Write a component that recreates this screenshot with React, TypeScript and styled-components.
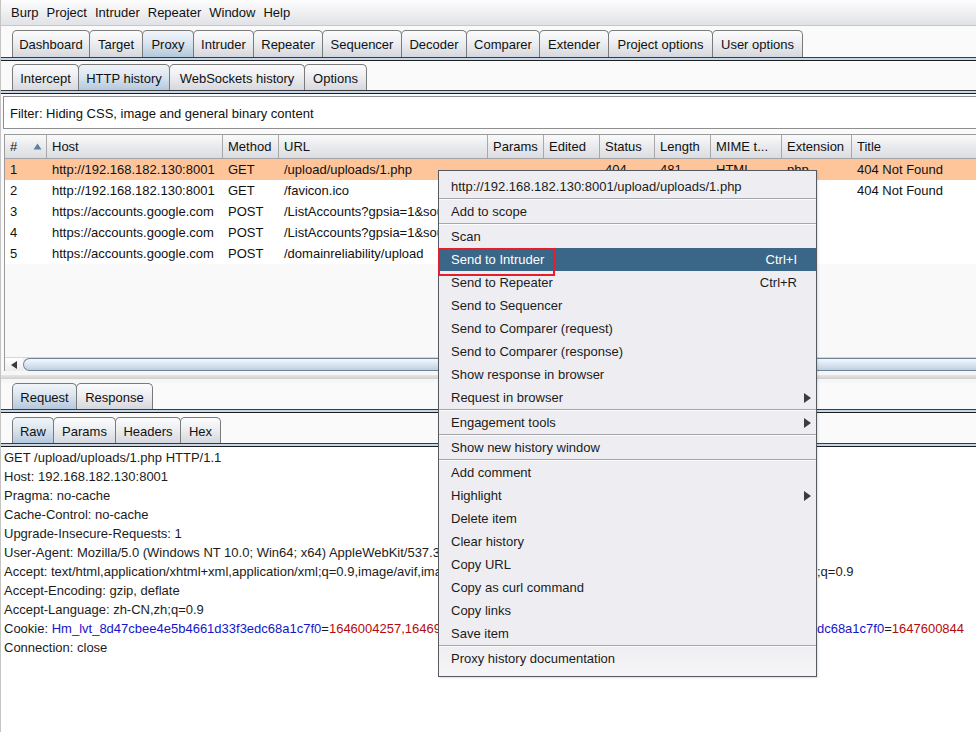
import React from "react";
import styled, { createGlobalStyle } from "styled-components";

const GlobalStyle = createGlobalStyle`
  html, body {
    margin: 0;
    padding: 0;
    background: #fafafa;
  }
  body {
    font-family: "Liberation Sans", Arial, sans-serif;
    font-size: 13px;
    color: #111;
  }
  * {
    box-sizing: border-box;
  }
`;

const Frame = styled.div`
  position: relative;
  width: 976px;
  height: 732px;
  overflow: hidden;
  display: flex;
  flex-direction: column;
  background: #fafafa;
  border-left: 1px solid #c4c4c4;
`;

const MenuBar = styled.div`
  height: 26px;
  flex: none;
  display: flex;
  align-items: center;
  padding-left: 6px;
  background: linear-gradient(#fdfdfd, #e1e2e6);
  border-bottom: 1px solid #c6c7cc;
`;

const MenuEntry = styled.span`
  padding: 0 4px;
  line-height: 25px;
`;

const TabRow = styled.div<{ $top: number; $h?: number }>`
  display: flex;
  flex: none;
  height: ${(p) => p.$h ?? 26}px;
  margin-top: ${(p) => p.$top}px;
  padding-left: 11px;
`;

const Tab = styled.div<{ $active?: boolean; $w: number }>`
  width: ${(p) => p.$w + 1}px;
  height: 100%;
  padding-top: 1px;
  margin-right: -1px;
  display: flex;
  align-items: center;
  justify-content: center;
  white-space: nowrap;
  border: 1px solid #7a7a7a;
  border-bottom: none;
  border-radius: 5px 5px 0 0;
  background: ${(p) =>
    p.$active
      ? "linear-gradient(#f1f5f9, #dbe5ef 45%, #b4c8dc)"
      : "linear-gradient(#fcfcfd, #eceef1 45%, #d6d8de)"};
`;

const Strip = styled.div`
  flex: none;
  height: 4px;
  border-top: 1px solid #3a3a3a;
  border-bottom: 1px solid #1e1e1e;
  background: #c5d7ea;
`;

const FilterBar = styled.div`
  flex: none;
  height: 33px;
  margin: 2px 0 0 2px;
  padding: 1px 0 0 6px;
  display: flex;
  align-items: center;
  background: #fff;
  border: 1px solid #8f8f8f;
  border-right: none;
`;

const Table = styled.div`
  flex: none;
  height: 237px;
  margin: 5px 0 0 3px;
  display: flex;
  flex-direction: column;
  background: #f9f9f9;
  border-left: 1px solid #9a9a9a;
  border-top: 1px solid #9a9a9a;
`;

const HeaderRow = styled.div`
  flex: none;
  height: 24px;
  display: flex;
  background: linear-gradient(#fafafa, #e9eaed 50%, #dcdde2);
  border-bottom: 1px solid #a3a3a3;
`;

const HeadCell = styled.div<{ $w: number }>`
  width: ${(p) => p.$w}px;
  flex: none;
  padding: 0 4px 0 5px;
  display: flex;
  align-items: center;
  justify-content: space-between;
  white-space: nowrap;
  overflow: hidden;
  border-right: 1px solid #a9a9a9;
`;

const Row = styled.div<{ $selected?: boolean }>`
  flex: none;
  height: 21px;
  display: flex;
  align-items: center;
  background: ${(p) => (p.$selected ? "#fec59b" : "#ffffff")};
`;

const Cell = styled.div<{ $w: number }>`
  width: ${(p) => p.$w}px;
  flex: none;
  padding-left: 5px;
  white-space: nowrap;
  overflow: hidden;
`;

const TableFill = styled.div`
  flex: 1;
  background: #f9f9f9;
`;

const HScroll = styled.div`
  flex: none;
  height: 14px;
  display: flex;
  background: #eef0f3;
  border-top: 1px solid #d6d6d6;
`;

const ScrollButton = styled.div`
  width: 18px;
  flex: none;
  display: flex;
  align-items: center;
  justify-content: center;
  background: linear-gradient(#ffffff, #ececec);
`;

const ScrollThumb = styled.div`
  flex: 1;
  border: 1px solid #6f8296;
  border-right: none;
  border-radius: 8px 0 0 8px;
  background: linear-gradient(#f4f7fb, #dce7f2 45%, #bccfe3);
`;

const SplitDivider = styled.div`
  flex: none;
  height: 12px;
  display: flex;
  align-items: center;
  background: #f6f6f6;
  &::before {
    content: "";
    flex: 1;
    height: 4px;
    background: linear-gradient(#e6e6e6, #cfcfcf);
  }
`;

const Editor = styled.div`
  flex: 1;
  background: #fff;
  padding: 1px 0 0 3px;
  font-size: 13px;
  line-height: 19px;
  color: #1c1c1c;
  white-space: pre;
`;

const Key = styled.span`
  color: #1515c8;
`;

const Val = styled.span`
  color: #b30c0c;
`;

const ContextMenu = styled.div`
  position: absolute;
  left: 437px;
  top: 170px;
  width: 379px;
  height: 507px;
  padding: 4px 0 7px;
  background: linear-gradient(#eeeef2 94%, #f6f6f8);
  border: 1px solid #555a60;
  color: #1b1b1b;
  box-shadow: 1px 1px 2px rgba(0, 0, 0, 0.12);
`;

const MenuItem = styled.div<{ $hot?: boolean }>`
  position: relative;
  height: 23px;
  display: flex;
  align-items: center;
  justify-content: space-between;
  padding: 0 19px 0 12px;
  white-space: nowrap;
  background: ${(p) => (p.$hot ? "#3a6688" : "transparent")};
  color: ${(p) => (p.$hot ? "#ffffff" : "inherit")};
  ${(p) =>
    p.$hot &&
    `&::after {
      content: "";
      position: absolute;
      left: -1px;
      top: 0;
      width: 113px;
      height: 24px;
      border: 2px solid #e41f2b;
    }`}
`;

const Shortcut = styled.span`
  margin-right: 0;
`;

const SubArrow = styled.svg`
  margin-right: -14px;
`;

const Separator = styled.div`
  height: 2px;
  border-top: 1px solid #a6a7ad;
  border-bottom: 1px solid #fbfbfc;
`;

const mainTabs: [string, number][] = [
  ["Dashboard", 77],
  ["Target", 53],
  ["Proxy", 51],
  ["Intruder", 60],
  ["Repeater", 69],
  ["Sequencer", 79],
  ["Decoder", 65],
  ["Comparer", 73],
  ["Extender", 69],
  ["Project options", 104],
  ["User options", 90],
];

const proxyTabs: [string, number][] = [
  ["Intercept", 66],
  ["HTTP history", 91],
  ["WebSockets history", 135],
  ["Options", 62],
];

const messageTabs: [string, number][] = [
  ["Request", 64],
  ["Response", 76],
];

const viewTabs: [string, number][] = [
  ["Raw", 41],
  ["Params", 62],
  ["Headers", 65],
  ["Hex", 40],
];

const cols = [
  { name: "#", w: 42 },
  { name: "Host", w: 176 },
  { name: "Method", w: 56 },
  { name: "URL", w: 209 },
  { name: "Params", w: 56 },
  { name: "Edited", w: 56 },
  { name: "Status", w: 55 },
  { name: "Length", w: 56 },
  { name: "MIME t...", w: 71 },
  { name: "Extension", w: 70 },
  { name: "Title", w: 300 },
];

const listUrl = "/ListAccounts?gpsia=1&source=ChromiumBrowser&json=standard";

const rows = [
  ["1", "http://192.168.182.130:8001", "GET", "/upload/uploads/1.php", "", "", "404", "481", "HTML", "php", "404 Not Found"],
  ["2", "http://192.168.182.130:8001", "GET", "/favicon.ico", "", "", "404", "481", "HTML", "ico", "404 Not Found"],
  ["3", "https://accounts.google.com", "POST", listUrl, "", "", "200", "836", "JSON", "", ""],
  ["4", "https://accounts.google.com", "POST", listUrl, "", "", "200", "836", "JSON", "", ""],
  ["5", "https://accounts.google.com", "POST", "/domainreliability/upload", "", "", "200", "311", "", "", ""],
];

type Entry =
  | { sep: true }
  | { label: string; key?: string; sub?: boolean; hot?: boolean };

const menu: Entry[] = [
  { label: "http://192.168.182.130:8001/upload/uploads/1.php" },
  { sep: true },
  { label: "Add to scope" },
  { sep: true },
  { label: "Scan" },
  { label: "Send to Intruder", key: "Ctrl+I", hot: true },
  { label: "Send to Repeater", key: "Ctrl+R" },
  { label: "Send to Sequencer" },
  { label: "Send to Comparer (request)" },
  { label: "Send to Comparer (response)" },
  { label: "Show response in browser" },
  { label: "Request in browser", sub: true },
  { sep: true },
  { label: "Engagement tools", sub: true },
  { sep: true },
  { label: "Show new history window" },
  { sep: true },
  { label: "Add comment" },
  { label: "Highlight", sub: true },
  { label: "Delete item" },
  { label: "Clear history" },
  { label: "Copy URL" },
  { label: "Copy as curl command" },
  { label: "Copy links" },
  { label: "Save item" },
  { sep: true },
  { label: "Proxy history documentation" },
];

const cookieName = "8d47cbee4e5b4661d33f3edc68a1c7f0";

const TabSet = ({ tabs, active }: { tabs: [string, number][]; active: string }) => (
  <>
    {tabs.map(([t, w]) => (
      <Tab key={t} $w={w} $active={t === active}>
        {t}
      </Tab>
    ))}
  </>
);

const App = () => {
  return (
    <>
      <GlobalStyle />
      <Frame>
        <MenuBar>
          {["Burp", "Project", "Intruder", "Repeater", "Window", "Help"].map((m) => (
            <MenuEntry key={m}>{m}</MenuEntry>
          ))}
        </MenuBar>

        <TabRow $top={4} $h={27}>
          <TabSet tabs={mainTabs} active="Proxy" />
        </TabRow>
        <Strip />

        <TabRow $top={3}>
          <TabSet tabs={proxyTabs} active="HTTP history" />
        </TabRow>
        <Strip />

        <FilterBar>Filter: Hiding CSS, image and general binary content</FilterBar>

        <Table>
          <HeaderRow>
            {cols.map((c) => (
              <HeadCell key={c.name} $w={c.w}>
                {c.name}
                {c.name === "#" && (
                  <svg width="9" height="7" viewBox="0 0 9 7">
                    <path d="M4.5 0.5 L8.5 6.5 L0.5 6.5 Z" fill="#5a7ea6" />
                  </svg>
                )}
              </HeadCell>
            ))}
          </HeaderRow>
          {rows.map((r, i) => (
            <Row key={r[0]} $selected={i === 0}>
              {r.map((v, j) => (
                <Cell key={j} $w={cols[j].w}>
                  {v}
                </Cell>
              ))}
            </Row>
          ))}
          <TableFill />
          <HScroll>
            <ScrollButton>
              <svg width="6" height="8" viewBox="0 0 6 8">
                <path d="M0 4 L6 0 L6 8 Z" fill="#3a3a3a" />
              </svg>
            </ScrollButton>
            <ScrollThumb />
          </HScroll>
        </Table>

        <SplitDivider />

        <TabRow $top={0}>
          <TabSet tabs={messageTabs} active="Request" />
        </TabRow>
        <Strip />

        <TabRow $top={4}>
          <TabSet tabs={viewTabs} active="Raw" />
        </TabRow>
        <Strip />

        <Editor>
          <div>GET /upload/uploads/1.php HTTP/1.1</div>
          <div>Host: 192.168.182.130:8001</div>
          <div>Pragma: no-cache</div>
          <div>Cache-Control: no-cache</div>
          <div>Upgrade-Insecure-Requests: 1</div>
          <div>
            User-Agent: Mozilla/5.0 (Windows NT 10.0; Win64; x64) AppleWebKit/537.36 (KHTML, like Gecko) Chrome/99.0.4844.51 Safari/537.36
          </div>
          <div>
            Accept: text/html,application/xhtml+xml,application/xml;q=0.9,image/avif,image/webp,image/apng,*/*;q=0.8,application/signed-exchange;v=b3;q=0.9
          </div>
          <div>Accept-Encoding: gzip, deflate</div>
          <div>Accept-Language: zh-CN,zh;q=0.9</div>
          <div>
            Cookie: <Key>Hm_lvt_{cookieName}</Key>=<Val>1646004257,1646958270,1647418567,164757</Val>;{" "}
            <Key>Hm_lpvt_{cookieName}</Key>=<Val>1647600844</Val>
          </div>
          <div>Connection: close</div>
        </Editor>

        <ContextMenu>
          {menu.map((m, i) =>
            "sep" in m ? (
              <Separator key={i} />
            ) : (
              <MenuItem key={i} $hot={m.hot}>
                <span>{m.label}</span>
                {m.key && <Shortcut>{m.key}</Shortcut>}
                {m.sub && (
                  <SubArrow width="7" height="10" viewBox="0 0 7 10">
                    <path d="M0 0 L7 5 L0 10 Z" fill="#3c3c3c" />
                  </SubArrow>
                )}
              </MenuItem>
            )
          )}
        </ContextMenu>
      </Frame>
    </>
  );
};

export default App;
